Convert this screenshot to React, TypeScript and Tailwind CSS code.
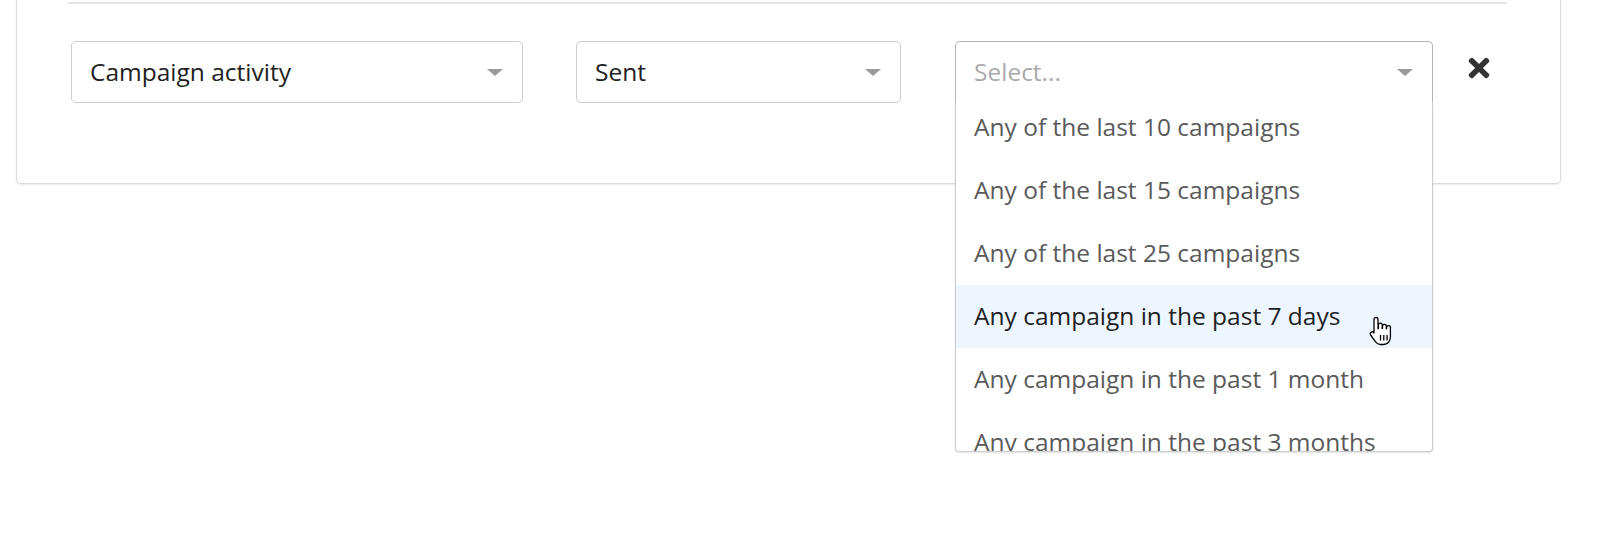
import React from "react";
import { FaTimes } from "react-icons/fa";

const font = { fontFamily: '"Open Sans", "Noto Sans", sans-serif' };

function Arrow() {
  return (
    <span className="block w-0 h-0 border-x-[8px] border-x-transparent border-t-[7px] border-t-[#999]" />
  );
}

function Select({ value, width }: { value: string; width: string }) {
  return (
    <div
      className={`${width} h-[62px] shrink-0 flex items-center justify-between border border-[#ccc] rounded-[5px] bg-white pl-[18px] pr-[19px]`}
    >
      <span className="text-[24.5px] text-[#222]">{value}</span>
      <Arrow />
    </div>
  );
}

const options = [
  "Any of the last 10 campaigns",
  "Any of the last 15 campaigns",
  "Any of the last 25 campaigns",
  "Any campaign in the past 7 days",
  "Any campaign in the past 1 month",
  "Any campaign in the past 3 months",
];

function Hand() {
  return (
    <svg width="28" height="32" viewBox="0 0 28 32" className="absolute left-[1368px] top-[315px] z-20">
      <path
        d="M8 2.5c1.2 0 2 .9 2 2v9.2l.4-.1V10c0-1.1.8-1.9 1.9-1.9s1.9.8 1.9 1.9v3.5h.3v-2.3c0-1.1.8-1.9 1.9-1.9s1.9.8 1.9 1.9v2.6h.3v-1.3c0-1.1.8-1.9 1.9-1.9s1.9.8 1.9 1.9V22c0 4-2.6 7.5-7 7.5h-3c-2.3 0-3.8-1.1-5-2.8L2.6 20c-.7-1-.4-2.2.5-2.8.9-.6 2.1-.4 2.8.5L6 18V4.5c0-1.1.8-2 2-2z"
        fill="#fff"
        stroke="#000"
        strokeWidth="1.3"
        strokeLinejoin="round"
      />
      <path d="M12.5 20v5.5M15.8 20v5.5M19.1 20v5.5" stroke="#000" strokeWidth="1.3" />
    </svg>
  );
}

export default function App() {
  return (
    <div className="relative w-[1600px] h-[539px] bg-white overflow-hidden" style={font}>
      <div className="ml-[16px] mt-[-40px] w-[1545px] h-[224px] border border-[#dcdcdc] rounded-[5px] shadow-[0_1px_2px_rgba(0,0,0,0.08)] bg-white pl-[51px] pr-[53px] pt-[41px]">
        <div className="h-[2px] bg-[#e5e5e5]" />
        <div className="flex items-start mt-[37px] pl-[3px]">
          <Select value="Campaign activity" width="w-[452px]" />
          <div className="w-[53px] shrink-0" />
          <Select value="Sent" width="w-[325px]" />
          <div className="w-[54px] shrink-0" />
          <div className="relative w-[478px] shrink-0">
            <div className="h-[62px] flex items-center justify-between border border-[#b3b3b3] border-b-[#e6e6e6] rounded-t-[5px] bg-white pl-[18px] pr-[19px]">
              <span className="text-[24.5px] text-[#aaa]">Select...</span>
              <Arrow />
            </div>
            <div className="absolute left-0 right-0 top-[61px] h-[350px] overflow-hidden border border-t-0 border-[#ccc] rounded-b-[4px] bg-white shadow-[0_1px_2px_rgba(0,0,0,0.12)] z-10">
              <div className="mt-[-6px]">
                {options.map((o, i) => (
                  <div
                    key={o}
                    className={`h-[63px] flex items-center pl-[18px] text-[24.5px] whitespace-nowrap ${
                      i === 3 ? "bg-[#edf6ff] text-[#222]" : "text-[#5a5a5a]"
                    }`}
                  >
                    {o}
                  </div>
                ))}
              </div>
            </div>
          </div>
          <div className="ml-[31px] mt-[12px] text-[#333]">
            <FaTimes size={30} />
          </div>
        </div>
      </div>
      <Hand />
    </div>
  );
}
